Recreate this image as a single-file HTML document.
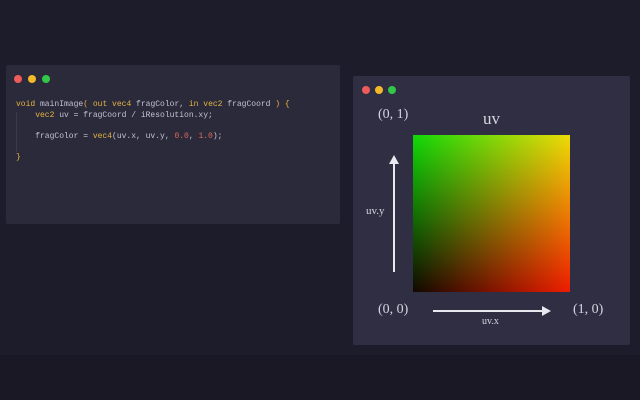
<!DOCTYPE html>
<html><head><style>
body{margin:0;width:640px;height:400px;background:#1d1c2a;position:relative;overflow:hidden;font-family:"Liberation Serif",serif}
.bot{position:absolute;left:0;top:355px;width:640px;height:45px;background:#191824}
.p{position:absolute;border-radius:2px}
.d{position:absolute;width:8px;height:8px;border-radius:50%}
pre{position:absolute;left:16px;top:100px;margin:0;font:8px/10.5px "Liberation Mono",monospace;color:#c4c1d2}
.k{color:#e3b341}.n{color:#e0685a}
.t{position:absolute;color:#d6d4e0;white-space:nowrap}
</style></head><body>
<div class="bot"></div>
<div class="p" style="left:6px;top:65px;width:334px;height:159px;background:#2b2a3a"></div>
<div class="d" style="left:14px;top:75px;background:#ef5b5b"></div>
<div class="d" style="left:28px;top:75px;background:#f2b929"></div>
<div class="d" style="left:42px;top:75px;background:#32c748"></div>
<div style="position:absolute;left:16px;top:112px;width:1px;height:40px;background:#3b3a4c"></div>
<pre><span class="k">void</span> mainImage<span class="k">(</span> <span class="k">out vec4</span> fragColor, <span class="k">in vec2</span> fragCoord <span class="k">) {</span>
    <span class="k">vec2</span> uv = fragCoord / iResolution.xy;

    fragColor = <span class="k">vec4</span>(uv.x, uv.y, <span class="n">0.0</span>, <span class="n">1.0</span>);

<span class="k">}</span></pre>
<div class="p" style="left:353px;top:76px;width:277px;height:269px;background:#2f2e42"></div>
<div class="d" style="left:362px;top:86px;background:#ef5b5b"></div>
<div class="d" style="left:375px;top:86px;background:#f2b929"></div>
<div class="d" style="left:388px;top:86px;background:#32c748"></div>
<div style="position:absolute;left:413px;top:135px;width:157px;height:157px;background:linear-gradient(to right,#000,#ee1500),linear-gradient(to top,#100800,#10d808);background-blend-mode:screen"></div>
<div class="t" style="left:378px;top:107px;font-size:14px">(0, 1)</div>
<div class="t" style="left:483px;top:109px;font-size:17px">uv</div>
<div class="t" style="left:366px;top:205px;font-size:11px">uv.y</div>
<div class="t" style="left:378px;top:302px;font-size:14px">(0, 0)</div>
<div class="t" style="left:573px;top:302px;font-size:14px">(1, 0)</div>
<div class="t" style="left:482px;top:316px;font-size:10px">uv.x</div>
<svg style="position:absolute;left:0;top:0" width="640" height="400">
<line x1="394" y1="272" x2="394" y2="162" stroke="#e8e8ee" stroke-width="2"/>
<polygon points="394,155 389,164 399,164" fill="#e8e8ee"/>
<line x1="433" y1="311" x2="543" y2="311" stroke="#e8e8ee" stroke-width="2"/>
<polygon points="551,311 542,306 542,316" fill="#e8e8ee"/>
</svg>
</body></html>
